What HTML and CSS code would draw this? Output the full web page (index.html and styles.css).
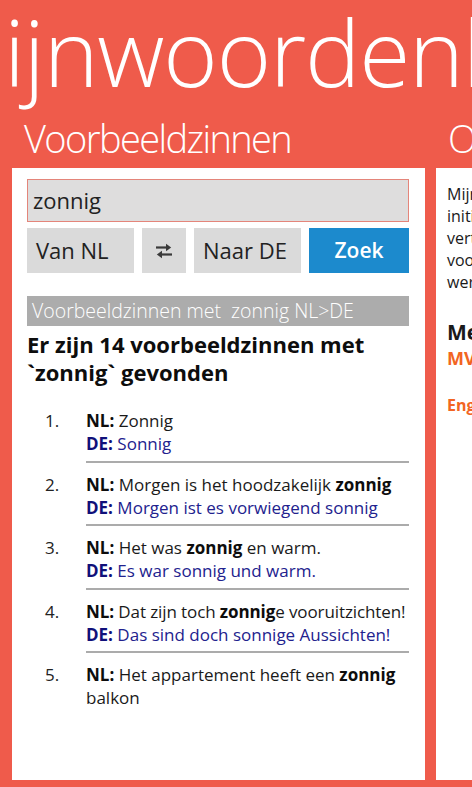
FILE: index.html
```html
<!DOCTYPE html>
<html lang="nl">
<head>
<meta charset="utf-8">
<title>Mijnwoordenboek - Voorbeeldzinnen</title>
<link rel="stylesheet" href="styles.css">
</head>
<body>
<div class="app-title">ijnwoordenboek</div>
<div class="hub">
  <section class="section section-main">
    <h2 class="section-title">Voorbeeldzinnen</h2>
    <div class="panel">
      <div class="search-input">zonnig</div>
      <div class="controls">
        <div class="btn btn-lang">Van NL</div>
        <div class="btn btn-swap">
          <svg width="18" height="16" viewBox="0 0 18 16" aria-hidden="true">
            <path d="M1 4.5h12" stroke="#3a3a3a" stroke-width="2.2" fill="none"/>
            <path d="M11 0.8l5.2 3.7-5.2 3.7z" fill="#3a3a3a"/>
            <path d="M17 11.5h-12" stroke="#3a3a3a" stroke-width="2.2" fill="none"/>
            <path d="M7 7.8l-5.2 3.7 5.2 3.7z" fill="#3a3a3a"/>
          </svg>
        </div>
        <div class="btn btn-lang">Naar DE</div>
        <div class="btn btn-search">Zoek</div>
      </div>
      <div class="result-bar">Voorbeeldzinnen met&nbsp; zonnig NL&gt;DE</div>
      <h3 class="result-heading">Er zijn 14 voorbeeldzinnen met `zonnig` gevonden</h3>
      <ol class="sentences">
        <li class="sentence">
          <span class="num">1.</span>
          <div class="pair">
            <div class="nl"><b>NL:</b> Zonnig</div>
            <div class="de"><b>DE:</b> Sonnig</div>
          </div>
        </li>
        <li class="sentence">
          <span class="num">2.</span>
          <div class="pair">
            <div class="nl"><b>NL:</b> Morgen is het hoodzakelijk <b>zonnig</b></div>
            <div class="de"><b>DE:</b> Morgen ist es vorwiegend sonnig</div>
          </div>
        </li>
        <li class="sentence">
          <span class="num">3.</span>
          <div class="pair">
            <div class="nl"><b>NL:</b> Het was <b>zonnig</b> en warm.</div>
            <div class="de"><b>DE:</b> Es war sonnig und warm.</div>
          </div>
        </li>
        <li class="sentence">
          <span class="num">4.</span>
          <div class="pair">
            <div class="nl tight"><b>NL:</b> Dat zijn toch <b>zonnig</b>e vooruitzichten!</div>
            <div class="de"><b>DE:</b> Das sind doch sonnige Aussichten!</div>
          </div>
        </li>
        <li class="sentence last">
          <span class="num">5.</span>
          <div class="pair">
            <div class="nl"><b>NL:</b> Het appartement heeft een <b>zonnig</b> balkon</div>
          </div>
        </li>
      </ol>
    </div>
  </section>
  <section class="section section-side">
    <h2 class="section-title">Over</h2>
    <div class="panel side-panel">
      <p class="about">Mijnwoordenboek is een<br>initiatief om gratis<br>vertalingen en uitleg<br>voor woorden te geven,<br>wereldwijd.</p>
      <h3 class="side-heading">Meer</h3>
      <div class="side-link">MVO</div>
      <div class="side-link small">Engels</div>
    </div>
  </section>
</div>
</body>
</html>
```
FILE: styles.css
```css
html, body {
  margin: 0;
  padding: 0;
}
body {
  width: 472px;
  height: 787px;
  overflow: hidden;
  background: #ef5b4b;
  font-family: "Open Sans", "Noto Sans", "Liberation Sans", sans-serif;
  color: #1a1a1a;
}
.app-title {
  color: #ffffff;
  font-weight: 300;
  font-size: 93px;
  line-height: 94px;
  letter-spacing: -1.2px;
  padding-top: 4px;
  padding-left: 4px;
  white-space: nowrap;
}
.hub {
  display: flex;
  gap: 11px;
  padding-left: 12px;
}
.section {
  flex-shrink: 0;
}
.section-main {
  width: 413px;
}
.section-side {
  width: 300px;
}
.section-title {
  margin: 20px 0 10px;
  padding-left: 12px;
  color: #ffffff;
  font-weight: 300;
  font-size: 38px;
  line-height: 40px;
  letter-spacing: -1.6px;
  white-space: nowrap;
}
.panel {
  background: #ffffff;
  height: 612px;
  box-sizing: border-box;
  padding: 11px 16px 0 15px;
}
.search-input {
  height: 43px;
  box-sizing: border-box;
  background: #dedddd;
  border: 1px solid #e4857a;
  font-size: 22px;
  line-height: 41px;
  padding-left: 5px;
  color: #222;
}
.controls {
  display: flex;
  gap: 8px;
  margin-top: 6px;
  height: 45px;
}
.btn {
  background: #dadada;
  font-size: 22px;
  line-height: 45px;
  color: #222;
  box-sizing: border-box;
}
.btn-lang {
  width: 107px;
  padding-left: 9px;
}
.btn-swap {
  width: 44px;
  display: flex;
  align-items: center;
  justify-content: center;
}
.btn-search {
  flex: 1;
  background: #1c8acd;
  color: #ffffff;
  font-weight: 600;
  font-size: 21px;
  text-align: center;
}
.result-bar {
  margin-top: 23px;
  height: 30px;
  background: #acacac;
  color: #ffffff;
  font-weight: 300;
  font-size: 19.5px;
  line-height: 30px;
  padding-left: 5px;
  white-space: nowrap;
}
.result-heading {
  margin: 4px 0 0;
  font-size: 22px;
  line-height: 28px;
  font-weight: 700;
  color: #0d0d0d;
}
.sentences {
  list-style: none;
  margin: 13px 0 0;
  padding: 0;
}
.sentence {
  display: grid;
  grid-template-columns: 59px 1fr;
  font-size: 17px;
  line-height: 23px;
}
.num {
  padding-left: 18px;
  padding-top: 10px;
  color: #222;
}
.pair {
  padding: 10px 0 5.5px;
  border-bottom: 2px solid #ababab;
}
.sentence.last .pair {
  border-bottom: none;
}
.nl b {
  color: #0d0d0d;
}
.nl.tight {
  letter-spacing: -0.1px;
  white-space: nowrap;
}
.de {
  color: #22228e;
}
.de b {
  color: #10107a;
}
.side-panel {
  padding: 15px 0 0 11px;
}
.about {
  margin: 0;
  font-size: 16px;
  line-height: 22px;
  white-space: nowrap;
}
.side-heading {
  margin: 25px 0 0;
  font-size: 21px;
  line-height: 28px;
  font-weight: 700;
}
.side-link {
  color: #f26522;
  font-weight: 700;
  font-size: 18px;
  line-height: 24px;
}
.side-link.small {
  margin-top: 23px;
  font-size: 16px;
}
```
